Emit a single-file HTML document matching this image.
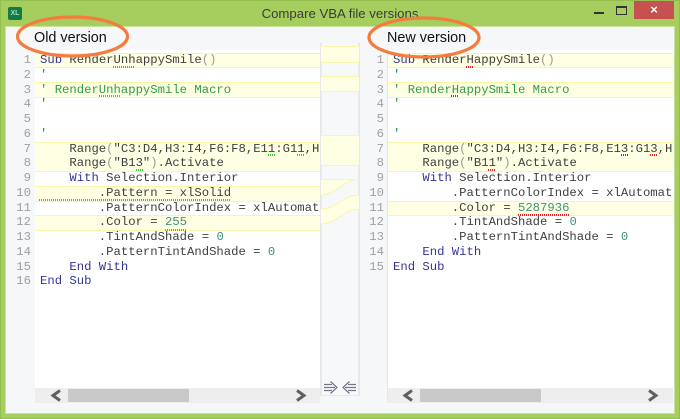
<!DOCTYPE html>
<html>
<head>
<meta charset="utf-8">
<style>
html,body{margin:0;padding:0;}
body{width:680px;height:419px;overflow:hidden;position:relative;background:#a5ce5e;font-family:"Liberation Sans",sans-serif;}
.abs{position:absolute;}
#frame{position:absolute;left:0;top:0;width:680px;height:419px;box-sizing:border-box;border:1px solid #93bf50;}
#content{position:absolute;left:6px;top:27px;width:668px;height:386px;background:#f6f7f9;box-shadow:0 0 0 1px #c9e29c;}
.pane{position:absolute;top:50px;height:338px;background:#fff;overflow:hidden;}
#pl{left:35px;width:285px;}
#pr{left:388px;width:285px;}
.hl{position:absolute;left:0;right:0;background:#feffe3;border-top:1px solid #f6f6ac;border-bottom:1px solid #f6f6ac;box-sizing:border-box;}
.ln{position:absolute;left:5px;height:15px;line-height:15px;font-family:"Liberation Mono",monospace;font-size:12.25px;white-space:pre;color:#3f3f3f;}
.num{position:absolute;width:24px;text-align:right;height:15px;line-height:15px;font-family:"Liberation Mono",monospace;font-size:12.25px;color:#a0a0a0;}
.k{color:#34349a;}
.c{color:#2f9c4a;}
.t{color:#0f8f66;}
.n{color:#3e9080;}
.p{color:#9a9a9a;}
.sg,.sr{position:absolute;height:2px;}
.sg{background:repeating-linear-gradient(90deg,#2fd02f 0 1px,transparent 1px 2px);}
.sr{background:repeating-linear-gradient(90deg,#e02020 0 1px,transparent 1px 2px);}
.sb{position:absolute;top:388px;height:15px;background:#eeeeee;width:285px;}
.th{position:absolute;top:1px;height:13px;background:#c8c8c8;width:121px;}
</style>
</head>
<body>
<div id="frame"></div>
<div class="abs" style="left:8px;top:7px;width:14px;height:13px;background:#15794a;border-radius:2px;color:#9fdcb0;font-size:7px;line-height:13px;text-align:center;font-weight:bold;">XL</div>
<div class="abs" style="left:0;width:680px;top:5px;text-align:center;font-size:13.2px;line-height:17px;color:#3b3b3b;">Compare VBA file versions</div>
<div class="abs" style="left:594px;top:12px;width:10px;height:2px;background:#333;"></div>
<div class="abs" style="left:616px;top:6px;border:1px solid #333;border-top:2px solid #333;width:9px;height:6px;"></div>
<div class="abs" style="left:634px;top:1px;width:40px;height:18px;background:#c75050;color:#fff;text-align:center;font-size:13px;line-height:18px;font-weight:bold;">×</div>

<div id="content"></div>

<div class="abs" style="left:320px;top:43px;width:40px;height:353px;background:#f7f8fa;box-sizing:border-box;border-left:2px solid #e8e8e8;border-right:2px solid #e8e8e8;border-bottom:1px solid #e8e8e8;"></div>
<div class="abs" style="left:35px;top:50px;width:1px;height:353px;background:#e6e6e6;"></div>
<div class="abs" style="left:387px;top:50px;width:1px;height:353px;background:#e6e6e6;"></div>

<svg class="abs" style="left:321px;top:43px;" width="38" height="200" viewBox="321 43 38 200">
<g fill="#feffe3" stroke="#f6f6ac" stroke-width="1">
<rect x="320" y="46.5" width="40" height="16"/>
<rect x="320" y="76.5" width="40" height="15"/>
<rect x="320" y="135.5" width="40" height="30"/>
<path d="M320 179.5H360L358 179.5C342 179.5 338 195 320 195Z"/>
<path d="M320 209C338 209 342 195 360 195V209C342 209 338 224 320 224Z"/>
</g>
</svg>

<div class="abs" style="left:7px;top:50px;width:28px;height:338px;">
<div class="num" style="left:0;top:3px">1</div>
<div class="num" style="left:0;top:17.75px">2</div>
<div class="num" style="left:0;top:32.5px">3</div>
<div class="num" style="left:0;top:47.25px">4</div>
<div class="num" style="left:0;top:62px">5</div>
<div class="num" style="left:0;top:76.75px">6</div>
<div class="num" style="left:0;top:91.5px">7</div>
<div class="num" style="left:0;top:106.25px">8</div>
<div class="num" style="left:0;top:121px">9</div>
<div class="num" style="left:0;top:135.75px">10</div>
<div class="num" style="left:0;top:150.5px">11</div>
<div class="num" style="left:0;top:165.25px">12</div>
<div class="num" style="left:0;top:180px">13</div>
<div class="num" style="left:0;top:194.75px">14</div>
<div class="num" style="left:0;top:209.5px">15</div>
<div class="num" style="left:0;top:224.25px">16</div>
</div>

<div class="pane" id="pl">
<div class="hl" style="top:3px;height:15px"></div>
<div class="hl" style="top:32px;height:16px"></div>
<div class="hl" style="top:92px;height:30px"></div>
<div class="hl" style="top:136px;height:16px"></div>
<div class="hl" style="top:165px;height:16px"></div>
<div class="ln" style="top:3px"><span class="k">Sub</span> RenderUnhappySmile<span class="p">()</span></div>
<div class="ln t" style="top:17.75px">'</div>
<div class="ln c" style="top:32.5px">' RenderUnhappySmile Macro</div>
<div class="ln t" style="top:47.25px">'</div>
<div class="ln t" style="top:76.75px">'</div>
<div class="ln" style="top:91.5px">    Range<span class="p">(</span>"C3:D4,H3:I4,F6:F8,E11:G11,H</div>
<div class="ln" style="top:106.25px">    Range<span class="p">(</span>"B13"<span class="p">)</span>.Activate</div>
<div class="ln" style="top:121px">    <span class="k">With</span> Selection.Interior</div>
<div class="ln" style="top:135.75px">        .Pattern = xlSolid</div>
<div class="ln" style="top:150.5px">        .PatternColorIndex = xlAutomat</div>
<div class="ln" style="top:165.25px">        .Color = <span class="n">255</span></div>
<div class="ln" style="top:180px">        .TintAndShade = <span class="n">0</span></div>
<div class="ln" style="top:194.75px">        .PatternTintAndShade = <span class="n">0</span></div>
<div class="ln" style="top:209.5px">    <span class="k">End With</span></div>
<div class="ln" style="top:224.25px"><span class="k">End Sub</span></div>
<div class="sg" style="left:78px;top:16px;width:22px"></div>
<div class="sg" style="left:63.5px;top:45px;width:22px"></div>
<div class="sg" style="left:233px;top:104px;width:7px"></div>
<div class="sg" style="left:262px;top:104px;width:7px"></div>
<div class="sg" style="left:101px;top:119px;width:7px"></div>
<div class="sg" style="left:4px;top:149px;width:192px"></div>
<div class="sg" style="left:130px;top:178.5px;width:22px"></div>
</div>

<div class="sb" style="left:35px"><div class="th" style="left:33px"></div>
<svg class="abs" style="left:0;top:0" width="285" height="15">
<path d="M25 2.5L18 7.5L25 12.5" fill="none" stroke="#606060" stroke-width="3"/>
<path d="M262 2.5L269 7.5L262 12.5" fill="none" stroke="#606060" stroke-width="3"/>
</svg></div>

<div class="abs" style="left:360px;top:50px;width:28px;height:338px;">
<div class="num" style="left:0;top:3px">1</div>
<div class="num" style="left:0;top:17.75px">2</div>
<div class="num" style="left:0;top:32.5px">3</div>
<div class="num" style="left:0;top:47.25px">4</div>
<div class="num" style="left:0;top:62px">5</div>
<div class="num" style="left:0;top:76.75px">6</div>
<div class="num" style="left:0;top:91.5px">7</div>
<div class="num" style="left:0;top:106.25px">8</div>
<div class="num" style="left:0;top:121px">9</div>
<div class="num" style="left:0;top:135.75px">10</div>
<div class="num" style="left:0;top:150.5px">11</div>
<div class="num" style="left:0;top:165.25px">12</div>
<div class="num" style="left:0;top:180px">13</div>
<div class="num" style="left:0;top:194.75px">14</div>
<div class="num" style="left:0;top:209.5px">15</div>
</div>

<div class="pane" id="pr">
<div class="hl" style="top:3px;height:15px"></div>
<div class="hl" style="top:32px;height:16px"></div>
<div class="hl" style="top:92px;height:30px"></div>
<div class="hl" style="top:151px;height:15px"></div>
<div class="ln" style="top:3px"><span class="k">Sub</span> RenderHappySmile<span class="p">()</span></div>
<div class="ln t" style="top:17.75px">'</div>
<div class="ln c" style="top:32.5px">' RenderHappySmile Macro</div>
<div class="ln t" style="top:47.25px">'</div>
<div class="ln t" style="top:76.75px">'</div>
<div class="ln" style="top:91.5px">    Range<span class="p">(</span>"C3:D4,H3:I4,F6:F8,E13:G13,H</div>
<div class="ln" style="top:106.25px">    Range<span class="p">(</span>"B11"<span class="p">)</span>.Activate</div>
<div class="ln" style="top:121px">    <span class="k">With</span> Selection.Interior</div>
<div class="ln" style="top:135.75px">        .PatternColorIndex = xlAutomat</div>
<div class="ln" style="top:150.5px">        .Color = <span class="n">5287936</span></div>
<div class="ln" style="top:165.25px">        .TintAndShade = <span class="n">0</span></div>
<div class="ln" style="top:180px">        .PatternTintAndShade = <span class="n">0</span></div>
<div class="ln" style="top:194.75px">    <span class="k">End With</span></div>
<div class="ln" style="top:209.5px"><span class="k">End Sub</span></div>
<div class="sr" style="left:78px;top:16px;width:7px"></div>
<div class="sr" style="left:63px;top:45px;width:7px"></div>
<div class="sr" style="left:233px;top:104px;width:7px"></div>
<div class="sr" style="left:262px;top:104px;width:7px"></div>
<div class="sr" style="left:100px;top:119px;width:7px"></div>
<div class="sr" style="left:130px;top:163.5px;width:52px"></div>
</div>

<div class="sb" style="left:388px"><div class="th" style="left:32px"></div>
<svg class="abs" style="left:0;top:0" width="285" height="15">
<path d="M24 2.5L17 7.5L24 12.5" fill="none" stroke="#606060" stroke-width="3"/>
<path d="M261 2.5L268 7.5L261 12.5" fill="none" stroke="#606060" stroke-width="3"/>
</svg></div>

<svg class="abs" style="left:322px;top:379px" width="36" height="16" viewBox="0 0 36 16">
<g fill="none" stroke="#707a86" stroke-width="1.2">
<path d="M2 5.5H10M2 8.5H13M2 11.5H10M8.5 2.5L15 8.5L8.5 14.5"/>
<path d="M34 5.5H26M34 8.5H23M34 11.5H26M27.5 2.5L21 8.5L27.5 14.5"/>
</g>
</svg>

<svg class="abs" style="left:0;top:0" width="680" height="70">
<ellipse cx="72.5" cy="36.5" rx="55" ry="19.5" fill="none" stroke="#f37c3e" stroke-width="3.2"/>
<ellipse cx="424" cy="37.5" rx="55" ry="19.5" fill="none" stroke="#f37c3e" stroke-width="3.2"/>
</svg>
<div class="abs" style="left:34px;top:29px;font-size:14.4px;line-height:18px;color:#111;">Old version</div>
<div class="abs" style="left:387px;top:29px;font-size:14.4px;line-height:18px;color:#111;">New version</div>
</body>
</html>
